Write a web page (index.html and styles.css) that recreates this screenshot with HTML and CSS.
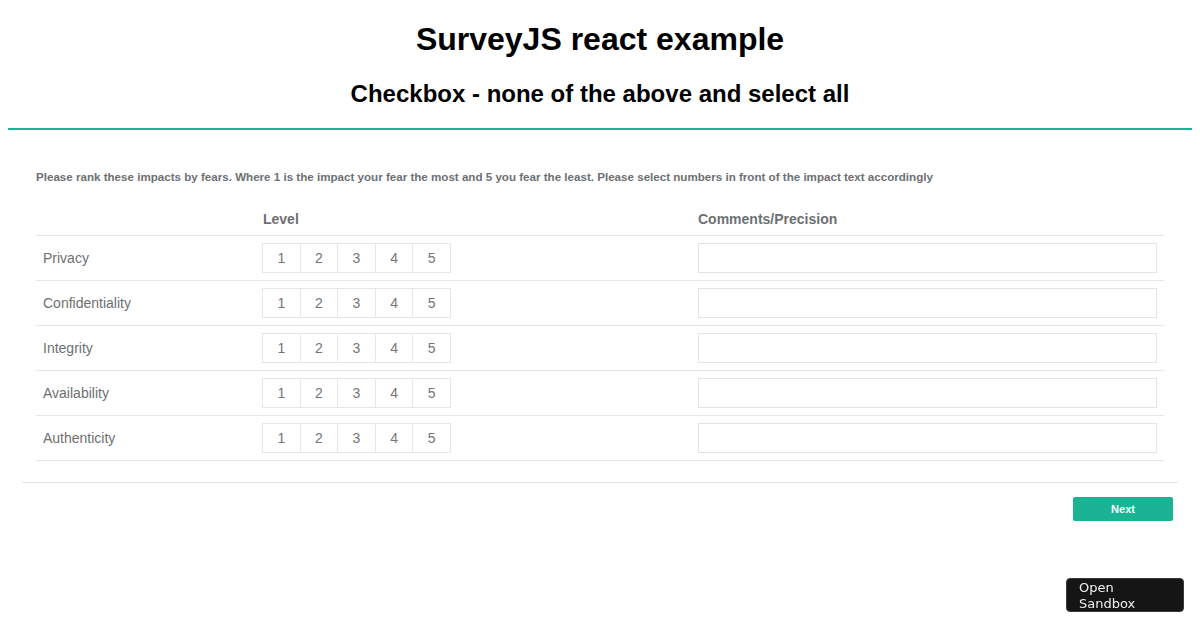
FILE: index.html
```html
<!DOCTYPE html>
<html>
<head>
<meta charset="utf-8">
<title>SurveyJS react example</title>
<link rel="stylesheet" href="styles.css">
</head>
<body>
<div class="app">
  <header class="hdr">
    <h1 class="title">SurveyJS react example</h1>
    <h2 class="subtitle">Checkbox - none of the above and select all</h2>
  </header>
  <main class="survey">
    <div class="question">
      <div class="q-title">Please rank these impacts by fears. Where 1 is the impact your fear the most and 5 you fear the least. Please select numbers in front of the impact text accordingly</div>
      <div class="matrix">
        <div class="m-row m-head">
          <div class="m-cell"></div>
          <div class="m-cell m-level">Level</div>
          <div class="m-cell">Comments/Precision</div>
        </div>
        <div class="m-row">
          <div class="m-cell m-label">Privacy</div>
          <div class="m-cell"><div class="rating"><span class="r-item">1</span><span class="r-item">2</span><span class="r-item">3</span><span class="r-item">4</span><span class="r-item">5</span></div></div>
          <div class="m-cell"><input class="txt" type="text"></div>
        </div>
        <div class="m-row">
          <div class="m-cell m-label">Confidentiality</div>
          <div class="m-cell"><div class="rating"><span class="r-item">1</span><span class="r-item">2</span><span class="r-item">3</span><span class="r-item">4</span><span class="r-item">5</span></div></div>
          <div class="m-cell"><input class="txt" type="text"></div>
        </div>
        <div class="m-row">
          <div class="m-cell m-label">Integrity</div>
          <div class="m-cell"><div class="rating"><span class="r-item">1</span><span class="r-item">2</span><span class="r-item">3</span><span class="r-item">4</span><span class="r-item">5</span></div></div>
          <div class="m-cell"><input class="txt" type="text"></div>
        </div>
        <div class="m-row">
          <div class="m-cell m-label">Availability</div>
          <div class="m-cell"><div class="rating"><span class="r-item">1</span><span class="r-item">2</span><span class="r-item">3</span><span class="r-item">4</span><span class="r-item">5</span></div></div>
          <div class="m-cell"><input class="txt" type="text"></div>
        </div>
        <div class="m-row">
          <div class="m-cell m-label">Authenticity</div>
          <div class="m-cell"><div class="rating"><span class="r-item">1</span><span class="r-item">2</span><span class="r-item">3</span><span class="r-item">4</span><span class="r-item">5</span></div></div>
          <div class="m-cell"><input class="txt" type="text"></div>
        </div>
      </div>
    </div>
  </main>
  <footer class="nav">
    <button class="next" type="button">Next</button>
  </footer>
</div>
<a class="sandbox"><span class="sandbox-text">Open Sandbox</span></a>
</body>
</html>
```

FILE: styles.css
```css
html, body {
  background: #ffffff;
}
body {
  margin: 8px;
  font-family: "Liberation Sans", Arial, sans-serif;
  color: #6d7072;
}
.hdr {
  padding: 12.7px 0 20.8px;
  border-bottom: 2px solid #1ab394;
  text-align: center;
  color: #000000;
}
.title {
  margin: 0;
  font-size: 32px;
  line-height: 37px;
  font-weight: bold;
}
.subtitle {
  margin: 22px 0 0;
  font-size: 24px;
  line-height: 27.6px;
  font-weight: bold;
}
.survey {
  margin: 0 14px;
  padding: 40px 14px 21px;
  border-bottom: 1px solid #e7e7e7;
}
.q-title {
  font-size: 11.6px;
  line-height: 13px;
  font-weight: bold;
  color: #6d7072;
}
.matrix {
  margin-top: 27px;
}
.m-row {
  display: grid;
  grid-template-columns: 219px 436px 1fr;
  border-bottom: 1px solid #e7e7e7;
  height: 45px;
  box-sizing: border-box;
  align-items: center;
}
.m-head {
  height: 26px;
  align-items: start;
  font-weight: bold;
  font-size: 14px;
  line-height: 16px;
}
.m-head .m-cell {
  padding-top: 1px;
}
.m-cell {
  padding: 0 7px;
  font-size: 14px;
}
.m-head .m-level {
  padding-left: 8px;
}
.m-label {
  line-height: 16px;
}
.rating {
  display: flex;
}
.r-item {
  width: 38.6px;
  height: 30px;
  box-sizing: border-box;
  border: 1px solid #e7e7e7;
  display: flex;
  align-items: center;
  justify-content: center;
  font-size: 14px;
  color: #737678;
}
.r-item + .r-item {
  margin-left: -1px;
}
.txt {
  display: block;
  width: 100%;
  height: 30px;
  box-sizing: border-box;
  border: 1px solid #e4e4e4;
  margin: 0;
  padding: 0 6px;
  font-family: "Liberation Sans", Arial, sans-serif;
  outline: none;
}
.nav {
  margin: 0 14px;
  display: flex;
  justify-content: flex-end;
  padding: 14px 5px 0;
}
.next {
  width: 100px;
  height: 24px;
  background: #1ab394;
  color: #ffffff;
  border: none;
  border-radius: 2px;
  font-family: "Liberation Sans", Arial, sans-serif;
  font-weight: bold;
  font-size: 11px;
  padding: 0;
}
.sandbox {
  position: fixed;
  right: 16px;
  bottom: 18px;
  width: 118px;
  height: 34px;
  box-sizing: border-box;
  background: #151515;
  border: 1px solid #3a3a3a;
  border-radius: 4px;
  padding: 1px 12px;
  color: #f0f0f0;
  font-family: "DejaVu Sans", sans-serif;
  font-size: 13px;
  line-height: 16px;
}
.sandbox-text {
  display: block;
  width: 80px;
}
```
